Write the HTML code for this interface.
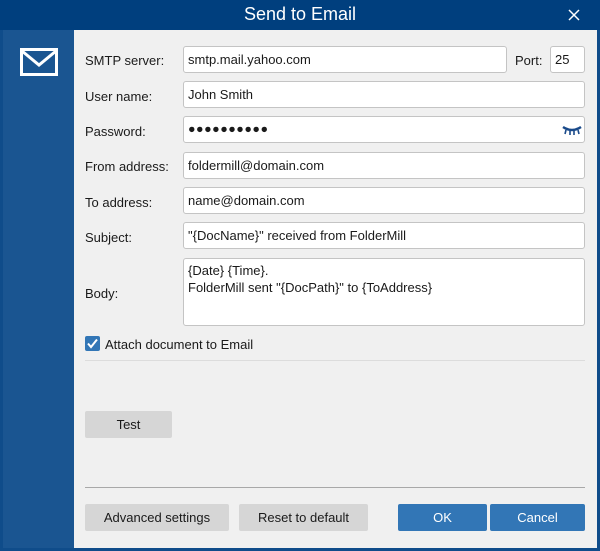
<!DOCTYPE html>
<html><head><style>
*{margin:0;padding:0;box-sizing:border-box}
body{width:600px;height:551px;background:#0f4c8a;font-family:"Liberation Sans",sans-serif;font-size:13px;color:#1a1a1a;position:relative;overflow:hidden}
.title{position:absolute;left:0;top:0;width:600px;height:30px;background:#003f7e;color:#fff;font-size:18px;text-align:center;line-height:29px}
.side{position:absolute;left:3px;top:30px;width:71px;height:518px;background:#1a5591}
.main{position:absolute;left:74px;top:30px;width:523px;height:518px;background:#f0f0f0}
.l{position:absolute;left:85px}
.in{position:absolute;background:#fff;border:1px solid #c4c4c4;border-radius:3px;padding-left:4px;line-height:25px;height:27px}
.btn{position:absolute;height:27px;line-height:27px;text-align:center;background:#d6d6d6;border-radius:2px}
.blue{background:#3276b6;color:#fff}
.sep{position:absolute;left:85px;width:500px;height:1px}
</style></head><body>
<div class="title">Send to Email</div>
<svg style="position:absolute;left:568px;top:9px" width="12" height="12" viewBox="0 0 12 12"><path d="M1 1 L11 11 M11 1 L1 11" stroke="#fff" stroke-width="1.5"/></svg>
<div class="side"><svg style="position:absolute;left:17px;top:18px" width="38" height="28" viewBox="0 0 38 28"><rect x="1.5" y="1.5" width="35" height="25" fill="none" stroke="#fff" stroke-width="3"/><path d="M2 3 L19 17 L36 3" fill="none" stroke="#fff" stroke-width="3"/></svg></div>
<div class="main"></div>
<div class="l" style="top:53px">SMTP server:</div>
<div class="in" style="left:183px;top:46px;width:324px">smtp.mail.yahoo.com</div>
<div style="position:absolute;left:515px;top:53px">Port:</div>
<div class="in" style="left:550px;top:46px;width:35px">25</div>
<div class="l" style="top:89px">User name:</div>
<div class="in" style="left:183px;top:81px;width:402px">John Smith</div>
<div class="l" style="top:124px">Password:</div>
<div class="in" style="left:183px;top:116px;width:402px;letter-spacing:0.5px;font-size:12.5px">●●●●●●●●●●</div>
<svg style="position:absolute;left:562px;top:125px" width="20" height="10" viewBox="0 0 20 10"><path d="M1 2 Q10 8 19 2" fill="none" stroke="#1a4a8a" stroke-width="2.5"/><path d="M4 5 L3 9 M8 6 L8 10 M12 6 L12 10 M16 5 L17 9" stroke="#1a4a8a" stroke-width="1.6"/></svg>
<div class="l" style="top:159px">From address:</div>
<div class="in" style="left:183px;top:152px;width:402px">foldermill@domain.com</div>
<div class="l" style="top:195px">To address:</div>
<div class="in" style="left:183px;top:187px;width:402px">name@domain.com</div>
<div class="l" style="top:230px">Subject:</div>
<div class="in" style="left:183px;top:222px;width:402px">"{DocName}" received from FolderMill</div>
<div class="l" style="top:286px">Body:</div>
<div class="in" style="left:183px;top:258px;width:402px;height:68px;line-height:17px;padding-top:3px">{Date} {Time}.<br>FolderMill sent "{DocPath}" to {ToAddress}</div>
<div style="position:absolute;left:85px;top:336px;width:15px;height:15px;background:#3276b6;border-radius:2px"><svg width="15" height="15" viewBox="0 0 15 15"><path d="M3 7.5 L6 11 L12 3.5" fill="none" stroke="#fff" stroke-width="2"/></svg></div>
<div style="position:absolute;left:105px;top:337px">Attach document to Email</div>
<div class="sep" style="top:360px;background:#dcdcdc"></div>
<div class="btn" style="left:85px;top:411px;width:87px">Test</div>
<div class="sep" style="top:487px;background:#a8a8a8"></div>
<div class="btn" style="left:85px;top:504px;width:144px">Advanced settings</div>
<div class="btn" style="left:239px;top:504px;width:129px">Reset to default</div>
<div class="btn blue" style="left:398px;top:504px;width:89px">OK</div>
<div class="btn blue" style="left:490px;top:504px;width:95px">Cancel</div>
</body></html>
